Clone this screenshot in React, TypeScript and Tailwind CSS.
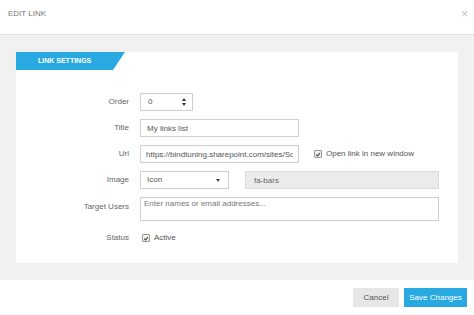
import { useState } from 'react'

function Check({ checked }: { checked: boolean }) {
  return (
    <span className="inline-flex h-[8px] w-[8px] items-center justify-center rounded-[1px] border border-[#999] bg-[#eee]">
      {checked && (
        <svg viewBox="0 0 10 10" className="h-[7px] w-[7px]">
          <path d="M2 5.2 L4.2 7.4 L8.2 2.6" fill="none" stroke="#444" strokeWidth="1.8" />
        </svg>
      )}
    </span>
  )
}

function Row({ label, top, children }: { label: string; top?: boolean; children: React.ReactNode }) {
  return (
    <div className={`flex ${top ? 'items-start' : 'items-center'} gap-[11px]`}>
      <label className={`w-[113px] shrink-0 text-right text-[8px] text-[#666] ${top ? 'pt-[4px]' : ''}`}>{label}</label>
      {children}
    </div>
  )
}

function App() {
  const [newWindow, setNewWindow] = useState(true)
  const [active, setActive] = useState(true)

  return (
    <div className="flex h-[315px] w-[474px] flex-col bg-white font-['Liberation_Sans',Arial,sans-serif]">
      {/* Header */}
      <header className="flex h-[35px] shrink-0 items-start justify-between border-b border-[#e3e3e3] pl-[8px] pr-[6px] pt-[8px]">
        <h2 className="text-[8px] uppercase text-[#777]">Edit Link</h2>
        <button className="text-[12px] leading-none text-[#c4c4c4]">×</button>
      </header>

      {/* Body */}
      <div className="flex h-[245px] shrink-0 flex-col bg-[#f1f1f1] px-[16px] py-[17px]">
        <div className="flex flex-1 flex-col bg-white">
          <div className="flex h-[18px] w-[109px] items-center bg-[#29a9e1] pl-[22px] text-[7px] font-bold uppercase text-white [clip-path:polygon(0_0,100%_0,89%_100%,0_100%)]">
            Link Settings
          </div>

          <div className="flex flex-col gap-[8px] pt-[23px]">
            <Row label="Order">
              <div className="flex h-[18px] w-[53px] items-center justify-between border border-[#cfcfcf] pl-[7px] pr-[6px] text-[8px] text-[#555]">
                <span>0</span>
                <span className="flex flex-col items-center gap-[2px]">
                  <span className="h-0 w-0 border-x-[2px] border-b-[3px] border-x-transparent border-b-[#333]" />
                  <span className="h-0 w-0 border-x-[2px] border-t-[3px] border-x-transparent border-t-[#333]" />
                </span>
              </div>
            </Row>

            <Row label="Title">
              <input
                readOnly
                defaultValue="My links list"
                className="h-[18px] w-[159px] border border-[#cfcfcf] px-[6px] text-[8px] text-[#555] outline-none"
              />
            </Row>

            <Row label="Url">
              <input
                readOnly
                defaultValue="https://bindtuning.sharepoint.com/sites/Sol"
                className="h-[18px] w-[159px] border border-[#cfcfcf] px-[5px] text-[8px] text-[#555] outline-none"
              />
              <button onClick={() => setNewWindow(!newWindow)} className="ml-[4px] flex items-center gap-[4px] text-[8px] text-[#555]">
                <Check checked={newWindow} />
                <span>Open link in new window</span>
              </button>
            </Row>

            <Row label="Image">
              <div className="flex h-[18px] w-[89px] items-center justify-between border border-[#cfcfcf] pl-[6px] pr-[8px] text-[8px] text-[#555]">
                <span>Icon</span>
                <span className="h-0 w-0 border-x-[2px] border-t-[3px] border-x-transparent border-t-[#444]" />
              </div>
              <input
                readOnly
                defaultValue="fa-bars"
                className="ml-[5px] h-[18px] w-[194px] border border-[#dcdcdc] bg-[#ebebeb] px-[8px] text-[8px] text-[#666] outline-none"
              />
            </Row>

            <Row label="Target Users" top>
              <textarea
                readOnly
                placeholder="Enter names or email addresses..."
                className="h-[24px] w-[299px] resize-none border border-[#cfcfcf] px-[3px] py-[1px] text-[8px] leading-[10px] text-[#555] outline-none placeholder:text-[#777]"
              />
            </Row>

            <div className="mt-[3px]">
              <Row label="Status">
                <button onClick={() => setActive(!active)} className="ml-[2px] flex items-center gap-[4px] text-[8px] text-[#555]">
                  <Check checked={active} />
                  <span>Active</span>
                </button>
              </Row>
            </div>
          </div>
        </div>
      </div>

      {/* Footer */}
      <footer className="flex flex-1 items-center justify-end gap-[5px] pr-[7px]">
        <button className="h-[19px] w-[46px] bg-[#e6e6e6] text-[8px] text-[#555]">Cancel</button>
        <button className="h-[19px] w-[63px] bg-[#29a9e1] text-[8px] text-white">Save Changes</button>
      </footer>
    </div>
  )
}

export default App
